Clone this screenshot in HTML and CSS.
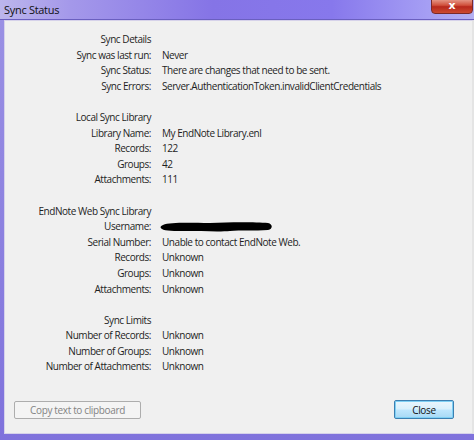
FILE: index.html
```html
<!DOCTYPE html>
<html>
<head>
<meta charset="utf-8">
<link rel="stylesheet" href="styles.css">
</head>
<body>
<div class="window">
  <div class="titlebar">
    <span class="title">Sync Status</span>
    <div class="close-x"><span>x</span></div>
  </div>
  <div class="frame">
    <div class="panel">
      <div class="info">
        <div class="head">Sync Details</div><div></div>
        <div class="lbl">Sync was last run:</div><div class="val">Never</div>
        <div class="lbl">Sync Status:</div><div class="val">There are changes that need to be sent.</div>
        <div class="lbl">Sync Errors:</div><div class="val">Server.AuthenticationToken.invalidClientCredentials</div>
        <div class="gap"></div><div class="gap"></div>

        <div class="head">Local Sync Library</div><div></div>
        <div class="lbl">Library Name:</div><div class="val">My EndNote Library.enl</div>
        <div class="lbl">Records:</div><div class="val">122</div>
        <div class="lbl">Groups:</div><div class="val">42</div>
        <div class="lbl">Attachments:</div><div class="val">111</div>
        <div class="gap"></div><div class="gap"></div>

        <div class="head">EndNote Web Sync Library</div><div></div>
        <div class="lbl">Username:</div>
        <div class="val redact-cell">
          <svg class="redact" width="114" height="12" viewBox="0 0 114 12">
            <path d="M3 4 C10 1 30 2 50 2 C70 1 95 1 108 2 C113 3 113 8 108 9 C95 10 80 9 70 10 C60 11 40 10 25 10 C15 10 5 10 2 8 C0 7 0 5 3 4 Z" fill="#000"/>
          </svg>
        </div>
        <div class="lbl">Serial Number:</div><div class="val">Unable to contact EndNote Web.</div>
        <div class="lbl">Records:</div><div class="val">Unknown</div>
        <div class="lbl">Groups:</div><div class="val">Unknown</div>
        <div class="lbl">Attachments:</div><div class="val">Unknown</div>
        <div class="gap"></div><div class="gap"></div>

        <div class="head">Sync Limits</div><div></div>
        <div class="lbl">Number of Records:</div><div class="val">Unknown</div>
        <div class="lbl">Number of Groups:</div><div class="val">Unknown</div>
        <div class="lbl">Number of Attachments:</div><div class="val">Unknown</div>
      </div>
      <div class="buttons">
        <div class="btn disabled">Copy text to clipboard</div>
        <div class="btn primary">Close</div>
      </div>
    </div>
  </div>
</div>
</body>
</html>
```
FILE: styles.css
```css
html, body {
  margin: 0;
  padding: 0;
  width: 474px;
  height: 440px;
  overflow: hidden;
  background: #7a6ad8;
}
.window {
  width: 474px;
  height: 440px;
  display: flex;
  flex-direction: column;
  font-family: "Open Sans", "Noto Sans", sans-serif;
  font-size: 10px;
  letter-spacing: -0.45px;
  color: #1e1e1e;
}
.titlebar {
  position: relative;
  height: 19px;
  flex: none;
  background: linear-gradient(90deg, #bcb6ec 0%, #a498ea 15%, #8574e6 45%, #8778ec 70%, #a59ef4 90%, #b4b0f2 100%);
  border-bottom: 1px solid #6a5fc0;
}
.title {
  position: absolute;
  left: 4px;
  top: 2px;
  font-size: 11px;
  letter-spacing: -0.3px;
  color: #101010;
}
.close-x {
  position: absolute;
  right: 1px;
  top: -2px;
  width: 40px;
  height: 14px;
  border: 1px solid #7a2a2a;
  border-radius: 0 0 4px 4px;
  background: linear-gradient(180deg, #e8a090 0%, #d0503c 45%, #b8281c 55%, #cc4a30 100%);
  display: flex;
  align-items: center;
  justify-content: center;
}
.close-x span {
  color: #fff;
  font-family: "DejaVu Sans", sans-serif;
  font-weight: bold;
  font-size: 11px;
  letter-spacing: 0;
  line-height: 1;
  margin-top: -1px;
}
.frame {
  flex: 1;
  display: flex;
  padding: 0 0 6px 4px;
  background: linear-gradient(180deg, #9a90e4 0%, #7f72dc 100%);
}
.panel {
  flex: 1;
  background: #f0f0f0;
  border: 1px solid #d6d2ea;
  border-right: 2px solid #e4e4e4;
  display: flex;
  flex-direction: column;
  padding-top: 11px;
}
.info {
  display: grid;
  grid-template-columns: 146px 1fr;
  column-gap: 11px;
  line-height: 15.6px;
}
.head, .lbl {
  text-align: right;
  white-space: nowrap;
}
.val {
  white-space: nowrap;
}
.gap {
  height: 15.6px;
}
.redact-cell {
  display: flex;
  align-items: center;
}
.redact {
  display: block;
  margin-left: -2px;
}
.buttons {
  margin-top: auto;
  display: flex;
  justify-content: space-between;
  align-items: center;
  padding: 0 18px 14px 9px;
}
.btn {
  height: 16px;
  display: flex;
  align-items: center;
  justify-content: center;
  border-radius: 2px;
  font-size: 10px;
  letter-spacing: -0.35px;
}
.btn.disabled {
  width: 125px;
  border: 1px solid #adadad;
  background: #f4f4f4;
  color: #838383;
}
.btn.primary {
  width: 58px;
  height: 17px;
  border: 1px solid #3c7fb1;
  background: linear-gradient(180deg, #eaf6fd 0%, #d9f0fc 45%, #bee6fd 55%, #a7d9f5 100%);
  box-shadow: inset 0 0 0 1px #7fd0f4;
  color: #111;
}
```
